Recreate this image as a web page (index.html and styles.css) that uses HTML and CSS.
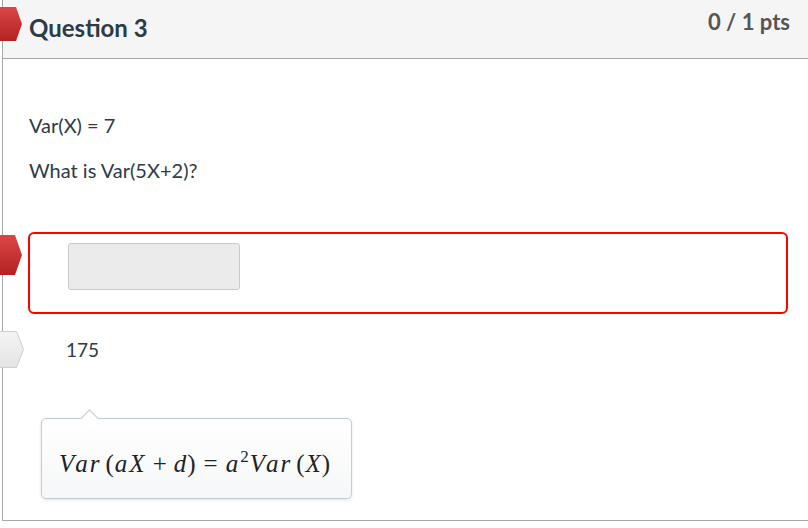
FILE: index.html
```html
<!DOCTYPE html>
<html>
<head>
<meta charset="utf-8">
<link rel="stylesheet" href="styles.css">
</head>
<body>
<div class="question">
  <svg class="flag flag-q" width="24" height="34" viewBox="0 0 24 34">
    <defs>
      <linearGradient id="rg" x1="0" y1="0" x2="0" y2="1">
        <stop offset="0" stop-color="#dc4646"/>
        <stop offset="1" stop-color="#b32222"/>
      </linearGradient>
    </defs>
    <polygon points="0,0 16,0 22,17 16,34 0,34" fill="url(#rg)"/>
  </svg>
  <div class="header">
    <h2 class="title">Question 3</h2>
    <div class="pts">0 / 1 pts</div>
  </div>
  <div class="content">
    <p class="line">Var(X) = 7</p>
    <p class="line">What is Var(5X+2)?</p>

    <div class="answer-box">
      <svg class="flag flag-a" width="24" height="40" viewBox="0 0 24 40">
        <defs>
          <linearGradient id="rg2" x1="0" y1="0" x2="0" y2="1">
            <stop offset="0" stop-color="#dc4646"/>
            <stop offset="1" stop-color="#b32222"/>
          </linearGradient>
        </defs>
        <polygon points="0,0 16,0 23,20 16,40 0,40" fill="url(#rg2)"/>
      </svg>
      <div class="input"></div>
    </div>

    <div class="correct-row">
      <svg class="flag flag-c" width="25" height="37" viewBox="0 0 25 37">
        <defs>
          <linearGradient id="gg" x1="0" y1="0" x2="0" y2="1">
            <stop offset="0" stop-color="#f4f4f4"/>
            <stop offset="1" stop-color="#e4e4e4"/>
          </linearGradient>
        </defs>
        <polygon points="-1,0.5 16.5,0.5 23.5,18.5 16.5,36.5 -1,36.5" fill="url(#gg)" stroke="#cfcfcf" stroke-width="1"/>
      </svg>
      <span class="correct">175</span>
    </div>

    <div class="tooltip">
      <div class="formula"><i>V</i><i class="a">a</i><i>r</i><span class="up lp">(</span><i class="a">a</i><i>X</i><span class="up bin">+</span><i>d</i><span class="up">)</span><span class="up rel">=</span><i class="a">a</i><sup>2</sup><i>V</i><i class="a">a</i><i>r</i><span class="up lp">(</span><i>X</i><span class="up">)</span></div>
    </div>
  </div>
</div>
</body>
</html>
```
FILE: styles.css
```css
html, body {
  margin: 0;
  padding: 0;
  background: #fff;
  overflow: hidden;
}
body {
  width: 808px;
  height: 528px;
  font-family: Lato, "Liberation Sans", sans-serif;
  color: #2d3b45;
}
.question {
  position: relative;
  margin-left: 2px;
  width: 820px;
  height: 521px;
  border-left: 1px solid #a8a8a8;
  border-bottom: 1px solid #a8a8a8;
  box-sizing: border-box;
}
.flag {
  position: absolute;
  display: block;
}
.flag-q {
  left: -3px;
  top: 7px;
}
.header {
  height: 58px;
  background: #f5f5f5;
  border-bottom: 1px solid #a8a8a8;
  display: flex;
  justify-content: space-between;
  align-items: flex-start;
  padding: 0 32px 0 26px;
}
.title {
  margin: 0;
  padding-top: 13px;
  font-size: 24px;
  line-height: 30px;
  font-weight: 700;
  color: #2d3b45;
}
.pts {
  padding-top: 8px;
  font-size: 22px;
  line-height: 28px;
  font-weight: 700;
  color: #555;
}
.content {
  padding: 54px 0 0 26px;
  position: relative;
}
.line {
  margin: 0 0 21px;
  font-size: 20px;
  line-height: 24px;
}
.answer-box {
  position: relative;
  margin: 50px 0 0 -1px;
  width: 760px;
  height: 82px;
  box-sizing: border-box;
  border: 2px solid #f00;
  border-radius: 6px;
  padding: 9px 0 0 38px;
}
.flag-a {
  left: -31px;
  top: 1px;
}
.input {
  width: 172px;
  height: 47px;
  box-sizing: border-box;
  background: #ebebeb;
  border: 1px solid #cacaca;
  border-radius: 3px;
}
.correct-row {
  position: relative;
  height: 37px;
  margin-top: 17px;
  display: flex;
  align-items: center;
  padding-left: 37px;
}
.flag-c {
  left: -29px;
  top: 0;
}
.correct {
  font-size: 19px;
  color: #2d3b45;
}
.tooltip {
  position: relative;
  margin: 50px 0 0 12px;
  width: 311px;
  height: 81px;
  box-sizing: border-box;
  border: 1px solid #c3ccd4;
  border-radius: 5px;
  background: linear-gradient(#fff, #f6f7f8);
  box-shadow: 0 1px 3px rgba(0, 0, 0, 0.12);
  display: flex;
  align-items: center;
  padding: 10px 0 0 17px;
}
.tooltip::before {
  content: "";
  position: absolute;
  left: 41px;
  top: -7px;
  width: 12px;
  height: 12px;
  background: #fff;
  border-top: 1px solid #c3ccd4;
  border-left: 1px solid #c3ccd4;
  transform: rotate(45deg);
}
.formula {
  font-family: "Liberation Serif", "DejaVu Serif", serif;
  font-size: 25px;
  color: #222;
  white-space: nowrap;
}
.formula i {
  font-style: italic;
  margin-right: 1px;
}
.formula i.a {
  margin-right: 2px;
}
.formula sup {
  font-size: 17px;
  line-height: 0;
  vertical-align: 10px;
  margin-right: 1px;
}
.up {
  font-style: normal;
}
.lp {
  margin-left: 5px;
  margin-right: 1px;
}
.bin {
  margin: 0 7px;
}
.rel {
  margin: 0 8px;
}
```
